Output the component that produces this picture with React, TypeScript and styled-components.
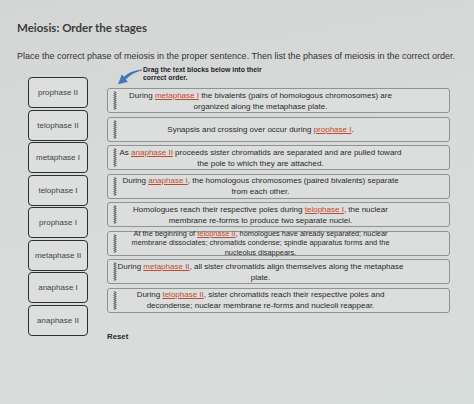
import React from "react";
import styled, { createGlobalStyle } from "styled-components";

const GlobalStyle = createGlobalStyle`
   html, body {
      margin: 0;
      padding: 0;
   }
   body {
      width: 474px;
      height: 404px;
      overflow: hidden;
      background: linear-gradient(170deg, #d4d6d5 0%, #d9dbda 45%, #d7ddda 100%);
      font-family: "Liberation Sans", Arial, sans-serif;
      color: #333;
   }
`;

const phases = [
   "prophase II",
   "telophase II",
   "metaphase I",
   "telophase I",
   "prophase I",
   "metaphase II",
   "anaphase I",
   "anaphase II",
];

interface Sentence {
   before: string;
   link: string;
   after: string;
   second: string;
   third?: string;
}

const sentences: Sentence[] = [
   {
      before: "During ",
      link: "metaphase I",
      after: " the bivalents (pairs of homologous chromosomes) are",
      second: "organized along the metaphase plate.",
   },
   {
      before: "Synapsis and crossing over occur during ",
      link: "prophase I",
      after: ".",
      second: "",
   },
   {
      before: "As ",
      link: "anaphase II",
      after: " proceeds sister chromatids are separated and are pulled toward",
      second: "the pole to which they are attached.",
   },
   {
      before: "During ",
      link: "anaphase I",
      after: ", the homologous chromosomes (paired bivalents) separate",
      second: "from each other.",
   },
   {
      before: "Homologues reach their respective poles during ",
      link: "telophase I",
      after: ", the nuclear",
      second: "membrane re-forms to produce two separate nuclei.",
   },
   {
      before: "At the beginning of ",
      link: "telophase II",
      after: ", homologues have already separated; nuclear",
      second: "membrane dissociates; chromatids condense; spindle apparatus forms and the",
      third: "nucleolus disappears.",
   },
   {
      before: "During ",
      link: "metaphase II",
      after: ", all sister chromatids align themselves along the metaphase",
      second: "plate.",
   },
   {
      before: "During ",
      link: "telophase II",
      after: ", sister chromatids reach their respective poles and",
      second: "decondense; nuclear membrane re-forms and nucleoli reappear.",
   },
];

function Grip() {
   return (
      <GripIcon width="4" height="19" viewBox="0 0 4 19">
         <polyline
            points="1,0.5 3,1.5 1,2.5 3,3.5 1,4.5 3,5.5 1,6.5 3,7.5 1,8.5 3,9.5 1,10.5 3,11.5 1,12.5 3,13.5 1,14.5 3,15.5 1,16.5 3,17.5 1,18.5"
            fill="none"
            stroke="#6c716f"
            strokeWidth="1.1"
         />
      </GripIcon>
   );
}

function Arrow() {
   return (
      <svg width="26" height="16" viewBox="0 0 26 16">
         <path
            d="M25 1 C17 1.8 11 4 7 8.3 L5 6 L1.5 14.8 L10.5 12.6 L8.5 10.7 C12.5 6 17.5 3 25 1 Z"
            fill="#3a78c2"
            stroke="#2b5f9e"
            strokeWidth="0.5"
         />
      </svg>
   );
}

export default function App() {
   return (
      <>
         <GlobalStyle />
         <Page>
            <Title>Meiosis: Order the stages</Title>
            <Instructions>
               Place the correct phase of meiosis in the proper sentence. Then
               list the phases of meiosis in the correct order.
            </Instructions>
            <Main>
               <PhaseColumn>
                  {phases.map((p) => (
                     <PhaseCard key={p}>{p}</PhaseCard>
                  ))}
               </PhaseColumn>
               <SentenceColumn>
                  <Hint>
                     <Arrow />
                     <HintText>
                        Drag the text blocks below into their
                        <br />
                        correct order.
                     </HintText>
                  </Hint>
                  <SentenceList>
                     {sentences.map((s, i) => (
                        <SentenceCard key={i}>
                           <Grip />
                           <SentenceText $tight={!!s.third}>
                              {s.before}
                              <PhaseLink>{s.link}</PhaseLink>
                              {s.after}
                              {s.second && <br />}
                              {s.second}
                              {s.third && <br />}
                              {s.third}
                           </SentenceText>
                        </SentenceCard>
                     ))}
                  </SentenceList>
                  <Reset>Reset</Reset>
               </SentenceColumn>
            </Main>
         </Page>
      </>
   );
}

const Page = styled.div`
   padding: 21px 0 0 17px;
`;

const Title = styled.h1`
   margin: 0;
   font-family: Lato, "Open Sans", sans-serif;
   font-weight: 700;
   font-size: 11.5px;
   line-height: 14px;
   color: #3b3b3b;
`;

const Instructions = styled.p`
   margin: 16px 0 0;
   font-size: 9px;
   line-height: 10px;
   color: #333;
   white-space: nowrap;
`;

const Main = styled.div`
   display: flex;
   margin-top: 5px;
`;

const PhaseColumn = styled.div`
   display: flex;
   flex-direction: column;
   gap: 1.5px;
   width: 60px;
   margin: 11px 0 0 11px;
`;

const PhaseCard = styled.div`
   box-sizing: border-box;
   height: 31px;
   display: flex;
   align-items: center;
   justify-content: center;
   border: 1.5px solid #2e302f;
   border-radius: 4px;
   background: #dcdfde;
   font-size: 8px;
   color: #444;
`;

const SentenceColumn = styled.div`
   width: 343px;
   margin-left: 19px;
   display: flex;
   flex-direction: column;
`;

const Hint = styled.div`
   display: flex;
   align-items: flex-start;
   height: 19px;
   margin: 0 0 3px 10px;
   svg {
      margin-top: 3px;
   }
`;

const HintText = styled.div`
   font-size: 6.9px;
   line-height: 8px;
   font-weight: 700;
   color: #1f1f1f;
`;

const SentenceList = styled.div`
   display: flex;
   flex-direction: column;
   gap: 3.5px;
`;

const SentenceCard = styled.div`
   box-sizing: border-box;
   height: 25px;
   display: flex;
   align-items: center;
   padding-left: 5px;
   border: 1px solid #8f9392;
   border-radius: 3px;
   background: #dbdedd;
`;

const GripIcon = styled.svg`
   flex: none;
`;

const SentenceText = styled.div<{ $tight: boolean }>`
   flex: 1;
   margin-right: 45px;
   text-align: center;
   white-space: nowrap;
   font-size: ${(p) => (p.$tight ? "7.4px" : "8px")};
   line-height: ${(p) => (p.$tight ? "9.5px" : "11px")};
   color: #2a2a2a;
`;

const PhaseLink = styled.span`
   color: #c24a2c;
   text-decoration: underline;
`;

const Reset = styled.div`
   margin-top: 19px;
   font-size: 7.8px;
   line-height: 10px;
   font-weight: 700;
   color: #2a2a2a;
`;
